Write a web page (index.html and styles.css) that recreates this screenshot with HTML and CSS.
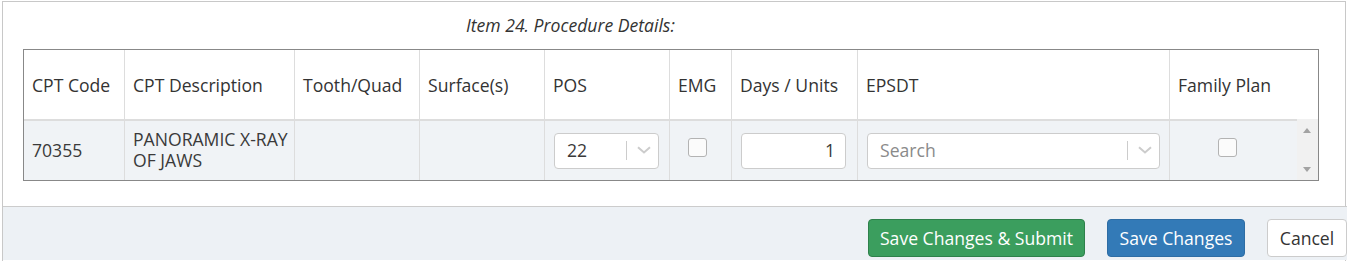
FILE: index.html
```html
<!DOCTYPE html>
<html>
<head>
<meta charset="utf-8">
<link rel="stylesheet" href="styles.css">
</head>
<body>
<div class="panel">
  <div class="panel-body">
    <div class="title">Item 24. Procedure Details:</div>
    <div class="tbl">
      <div class="row head">
        <div class="cell">CPT Code</div>
        <div class="cell">CPT Description</div>
        <div class="cell">Tooth/Quad</div>
        <div class="cell">Surface(s)</div>
        <div class="cell">POS</div>
        <div class="cell">EMG</div>
        <div class="cell">Days / Units</div>
        <div class="cell">EPSDT</div>
        <div class="cell last">Family Plan</div>
      </div>
      <div class="body-wrap">
        <div class="row body">
          <div class="cell">70355</div>
          <div class="cell desc">PANORAMIC X-RAY OF JAWS</div>
          <div class="cell"></div>
          <div class="cell"></div>
          <div class="cell ctl">
            <div class="select pos">
              <span class="val">22</span>
              <span class="ind"><span class="sep"></span><svg class="chev" width="14" height="8" viewBox="0 0 14 8"><path d="M1 1.2 L7 6.5 L13 1.2" fill="none" stroke="#cccccc" stroke-width="2"/></svg></span>
            </div>
          </div>
          <div class="cell chk emg"><span class="box"></span></div>
          <div class="cell ctl">
            <div class="input">1</div>
          </div>
          <div class="cell ctl">
            <div class="select epsdt">
              <span class="ph">Search</span>
              <span class="ind"><span class="sep"></span><svg class="chev" width="14" height="8" viewBox="0 0 14 8"><path d="M1 1.2 L7 6.5 L13 1.2" fill="none" stroke="#cccccc" stroke-width="2"/></svg></span>
            </div>
          </div>
          <div class="cell chk fp last"><span class="box"></span></div>
        </div>
        <div class="scrollbar">
          <span class="arr up"></span>
          <span class="arr down"></span>
        </div>
      </div>
    </div>
  </div>
  <div class="footer">
    <button class="btn success">Save Changes &amp; Submit</button>
    <button class="btn primary">Save Changes</button>
    <button class="btn default">Cancel</button>
  </div>
</div>
</body>
</html>
```
FILE: styles.css
```css
html, body {
  margin: 0;
  padding: 0;
  background: #ffffff;
  overflow: hidden;
  height: 261px;
}
body {
  font-family: "Open Sans", "Liberation Sans", sans-serif;
  font-size: 17.6px;
  color: #333333;
}
.panel {
  margin: 1px 0 0 2px;
  width: 1344px;
  border: 1px solid #c8c8c8;
  border-bottom: none;
  box-sizing: border-box;
  height: 260px;
}
.panel-body {
  padding: 12px 0 25px 20px;
}
.title {
  font-style: italic;
  line-height: 22px;
  height: 22px;
  padding-left: 443px;
  margin-bottom: 13px;
  color: #333;
}
.tbl {
  width: 1296px;
  box-sizing: border-box;
  border: 1px solid #888888;
}
.row {
  display: grid;
  grid-template-columns: 101px 170px 125px 125px 125px 62px 126px 312px 1fr;
}
.cell {
  box-sizing: border-box;
  border-right: 1px solid #dddddd;
  padding-left: 8px;
}
.cell.last {
  border-right: none;
}
.head .cell {
  height: 69px;
  display: flex;
  align-items: center;
  padding-top: 1px;
  background: #ffffff;
}
.body-wrap {
  display: flex;
}
.body {
  flex: 1;
}
.body .cell {
  height: 61px;
  border-top: 2px solid #dddddd;
  background: #f0f3f6;
  display: flex;
  align-items: center;
  line-height: 21px;
  color: #3a3a3a;
  padding-bottom: 1px;
}
.body .cell.desc {
  padding-right: 6px;
}
.body .cell.ctl {
  padding-left: 9px;
  padding-bottom: 0;
}
.select {
  box-sizing: border-box;
  height: 36px;
  border: 1px solid #cccccc;
  border-radius: 4px;
  background: #ffffff;
  display: flex;
  align-items: center;
  padding-left: 12px;
  padding-bottom: 1px;
}
.select.pos {
  width: 105px;
}
.select.epsdt {
  width: 293px;
}
.ph {
  color: #8a8a8a;
}
.ind {
  margin-left: auto;
  display: flex;
  align-items: center;
}
.sep {
  width: 1px;
  height: 19px;
  background: #cccccc;
  margin-right: 10px;
}
.chev {
  display: block;
  margin-right: 7px;
}
.input {
  box-sizing: border-box;
  width: 105px;
  height: 36px;
  border: 1px solid #cccccc;
  border-radius: 4px;
  background: #ffffff;
  text-align: right;
  padding-right: 10px;
  line-height: 33px;
}
.body .cell.chk {
  align-items: flex-start;
  padding-top: 17px;
}
.body .cell.emg {
  padding-left: 18px;
}
.body .cell.fp {
  padding-left: 48px;
}
.box {
  display: block;
  width: 19px;
  height: 19px;
  box-sizing: border-box;
  border: 1px solid #b3b3b3;
  border-radius: 3px;
  background: #fbfbfb;
}
.scrollbar {
  width: 21px;
  height: 61px;
  background: #f1f1f1;
  position: relative;
}
.arr {
  position: absolute;
  left: 6px;
  width: 0;
  height: 0;
  border-left: 4.5px solid transparent;
  border-right: 4.5px solid transparent;
}
.arr.up {
  top: 9px;
  border-bottom: 5px solid #a3a3a3;
}
.arr.down {
  top: 48px;
  border-top: 5px solid #a3a3a3;
}
.footer {
  border-top: 1px solid #cccccc;
  background: #edf1f5;
  height: 54px;
  padding-top: 12px;
  box-sizing: border-box;
  display: flex;
  justify-content: flex-end;
  align-items: flex-start;
  gap: 22px;
  margin-right: -2px;
}
.btn {
  font-family: "Open Sans", "Liberation Sans", sans-serif;
  font-size: 17.6px;
  height: 38px;
  padding: 0;
  border-radius: 4px;
  border: 1px solid transparent;
  line-height: 35px;
  white-space: nowrap;
  text-align: center;
  box-sizing: border-box;
}
.btn.success {
  width: 217px;
  background: #3b9e5e;
  border-color: #2e814b;
  color: #ffffff;
}
.btn.primary {
  width: 138px;
  background: #337ab7;
  border-color: #2e6da4;
  color: #ffffff;
}
.btn.default {
  width: 80px;
  background: #ffffff;
  border-color: #cccccc;
  color: #333333;
}
```
